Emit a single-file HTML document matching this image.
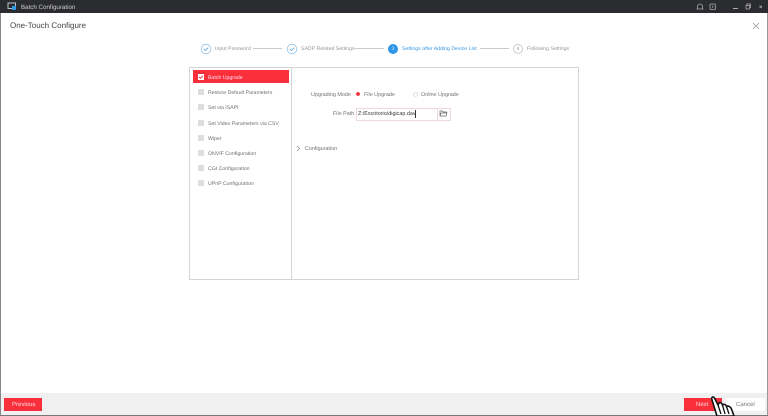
<!DOCTYPE html>
<html><head><meta charset="utf-8">
<style>
html,body{margin:0;padding:0;width:768px;height:416px;overflow:hidden;background:#fff;font-family:"Liberation Sans",sans-serif;text-rendering:geometricPrecision;}
.a{position:absolute;white-space:nowrap;}
.t{font-size:5.2px;line-height:8px;color:#707070;margin-top:1px;}
.r{font-size:5.4px;}
.cb{position:absolute;left:198px;width:6px;height:6px;background:#dedede;}
.line{position:absolute;height:1px;background:#c8c8c8;top:48px;}
</style></head><body>
<div class="a" style="left:0;top:0;width:768px;height:13px;background:#2b2c30"></div>
<div class="a" style="left:0;top:13px;width:1px;height:403px;background:#888"></div>
<div class="a" style="left:767px;top:13px;width:1px;height:403px;background:#999"></div>
<svg class="a" style="left:7px;top:2px" width="10" height="9" viewBox="0 0 10 9"><path d="M1 1H8.500V6.500H1Z" fill="none" stroke="#b8c4d0" stroke-width="1"/><rect x="5" y="4" width="4" height="4" fill="#2f9be8"/></svg>
<div class="a" style="left:21px;top:4px;font-size:6.2px;line-height:8px;color:#ccc">Batch Configuration</div>
<svg class="a" style="left:695px;top:2px" width="73" height="10" viewBox="0 0 73 10" fill="none" stroke="#aaa" stroke-width=".8"><path d="M2.500 7V4.500a2.500 2.500 0 0 1 5 0V7M1.500 7H8.500"/><rect x="15" y="2" width="5.500" height="5.500" rx="1"/><path d="M17.800 3.500V6"/><path d="M38 6.500H43" stroke-width="1"/><rect x="51" y="3.500" width="3.500" height="3.500"/><path d="M52 3V2H55.500V5.500H55"/><path d="M64.500 3.500L67 6M67 3.500L64.500 6"/></svg>
<div class="a" style="left:10px;top:20px;font-size:8px;line-height:11px;color:#444">One-Touch Configure</div>
<svg class="a" style="left:752px;top:22px" width="8" height="8" viewBox="0 0 8 8"><path d="M1 1L7 7M7 1L1 7" stroke="#999" stroke-width=".8"/></svg>

<svg class="a" style="left:200px;top:43px" width="12" height="12" viewBox="0 0 12 12" fill="none"><circle cx="6" cy="6" r="4.800" stroke="#8fc3ec" stroke-width=".8"/><path d="M3.800 6L5.400 7.500L8.200 4.700" stroke="#4b9fe0" stroke-width=".8"/></svg>
<div class="a t" style="left:215px;top:44px;color:#999">Input Password</div>
<div class="line" style="left:253px;width:29px"></div>
<svg class="a" style="left:286px;top:43px" width="12" height="12" viewBox="0 0 12 12" fill="none"><circle cx="6" cy="6" r="4.800" stroke="#8fc3ec" stroke-width=".8"/><path d="M3.800 6L5.400 7.500L8.200 4.700" stroke="#4b9fe0" stroke-width=".8"/></svg>
<div class="a t" style="left:301px;top:44px;color:#999">SADP Related Settings</div>
<div class="line" style="left:355px;width:29px"></div>
<div class="a" style="left:388px;top:44px;width:10px;height:10px;border-radius:50%;background:#2f97ea;color:#cfe6fa;font-size:5px;line-height:10px;text-align:center">3</div>
<div class="a t" style="left:402px;top:44px;color:#3d9be6">Settings after Adding Device List</div>
<div class="line" style="left:480px;width:29px"></div>
<div class="a" style="left:513px;top:44px;width:8px;height:8px;border:1px solid #ccc;border-radius:50%;color:#999;font-size:5px;line-height:8px;text-align:center">4</div>
<div class="a t" style="left:527px;top:44px;color:#999">Following Settings</div>

<div class="a" style="left:189px;top:67px;width:388px;height:211px;border:1px solid #d4d4d4"></div>
<div class="a" style="left:291px;top:68px;width:1px;height:211px;background:#d4d4d4"></div>
<div class="a" style="left:193px;top:70px;width:96px;height:13px;background:#f9303c"></div>
<div class="a" style="left:198px;top:74px;width:6px;height:6px;background:#fff"></div>
<svg class="a" style="left:198px;top:74px" width="6" height="6" viewBox="0 0 6 6"><path d="M1.200 3L2.500 4.300L4.800 1.700" fill="none" stroke="#f9303c" stroke-width=".9"/></svg>
<div class="a t" style="left:208px;top:73px;color:#fde">Batch Upgrade</div>
<div class="cb" style="top:89px"></div><div class="a t" style="left:208px;top:88px">Restore Default Parameters</div>
<div class="cb" style="top:104px"></div><div class="a t" style="left:208px;top:103px">Set via ISAPI</div>
<div class="cb" style="top:120px"></div><div class="a t" style="left:208px;top:119px">Set Video Parameters via CSV</div>
<div class="cb" style="top:135px"></div><div class="a t" style="left:208px;top:134px">Wiper</div>
<div class="cb" style="top:150px"></div><div class="a t" style="left:208px;top:149px">ONVIF Configuration</div>
<div class="cb" style="top:165px"></div><div class="a t" style="left:208px;top:164px">CGI Configuration</div>
<div class="cb" style="top:180px"></div><div class="a t" style="left:208px;top:179px">UPnP Configuration</div>

<div class="a t r" style="left:311px;top:90px">Upgrading Mode</div>
<svg class="a" style="left:355px;top:91px" width="6" height="6" viewBox="0 0 6 6"><circle cx="3" cy="3" r="1.900" fill="#f02c38"/></svg>
<div class="a t r" style="left:364px;top:90px">File Upgrade</div>
<div class="a" style="left:413px;top:92px;width:3px;height:3px;border-radius:50%;border:1px solid #e2e2e2"></div>
<div class="a t r" style="left:421px;top:90px">Online Upgrade</div>
<div class="a t r" style="left:333px;top:109px">File Path</div>
<div class="a" style="left:356px;top:108px;width:93px;height:11px;border:1px solid #eed8d8"></div>
<div class="a" style="left:437px;top:109px;width:1px;height:11px;background:#eed8d8"></div>
<div class="a" style="left:358px;top:110px;font-size:5.400px;line-height:8px;color:#333">Z:/Escritorio/digicap.dav</div>
<div class="a" style="left:415px;top:110px;width:1px;height:8px;background:#333"></div>
<svg class="a" style="left:439px;top:110px" width="9" height="7" viewBox="0 0 9 7" fill="none"><path d="M1 6V1H3.500L4.300 2H7.500V3M1 6H7L8 3H2L1 6Z" stroke="#666" stroke-width=".7"/></svg>
<svg class="a" style="left:296px;top:145px" width="5" height="7" viewBox="0 0 5 7"><path d="M1 1L3.500 3.500L1 6" fill="none" stroke="#888" stroke-width=".7"/></svg>
<div class="a t r" style="left:305px;top:144px">Configuration</div>

<div class="a" style="left:1px;top:393px;width:766px;height:22px;background:#f0f0f0"></div>
<div class="a" style="left:0;top:415px;width:768px;height:1px;background:#777"></div>
<div class="a" style="left:4px;top:398px;width:38px;height:13px;background:#f9303c"></div>
<div class="a" style="left:12px;top:401px;font-size:6px;line-height:8px;color:#fdd">Previous</div>
<div class="a" style="left:684px;top:398px;width:38px;height:13px;background:#f9303c"></div>
<div class="a" style="left:696px;top:401px;font-size:6px;line-height:8px;color:#fdd">Next</div>
<div class="a" style="left:726px;top:398px;width:39px;height:13px;background:#fff"></div>
<div class="a" style="left:736px;top:401px;font-size:6px;line-height:8px;color:#777">Cancel</div>
<svg class="a" style="left:706px;top:395px" width="36" height="21" viewBox="0 0 36 21"><path d="M6 5C5 2 7 1 8.500 3L12 10L13 8C14.500 7 16 8 16.500 10C18 8.500 20 9.500 20.500 11.500C22 10.500 24.500 11.500 25.500 14L28 21H11L6 5Z" fill="#fff" stroke="#111" stroke-width="1.600"/><path d="M12 10L15 19M16.500 10L19 19M20.500 11.500L23 19" stroke="#111" stroke-width="1.300" fill="none"/></svg>
</body></html>
